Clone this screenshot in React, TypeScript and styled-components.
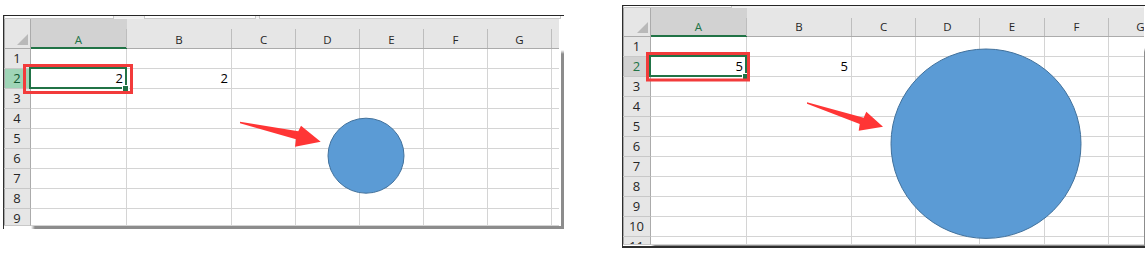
import React from "react";
import styled, { createGlobalStyle } from "styled-components";

type Column = { label: string; width: number; edge?: boolean };

interface SheetSpec {
  top: number;
  left: number;
  origin: [number, number];
  stripHeight: number;
  stripBoxes: [number, number][];
  headerHeight: number;
  headerPad: number;
  rowHead: number;
  columns: Column[];
  rowCount: number;
  lastRowHeight: number;
  value: string;
  rowTone: "green" | "gray";
  shadeTop: number;
  bottomShade: number;
  bottomBorder?: string;
  red: { x: number; y: number; w: number; h: number };
  circle: { cx: number; cy: number; rx: number; ry: number };
  arrow: string;
}

const GlobalStyle = createGlobalStyle`
  html, body {
    margin: 0;
    padding: 0;
    background: #fff;
  }
  body {
    font-family: "Open Sans", "Noto Sans", "DejaVu Sans", sans-serif;
  }
`;

const Page = styled.div`
  display: flex;
  align-items: flex-start;
  width: 1145px;
  height: 253px;
  overflow: hidden;
`;

const Panel = styled.div<{ $top: number; $left: number; $bottom?: string }>`
  position: relative;
  flex: none;
  margin: ${(p) => p.$top}px 0 0 ${(p) => p.$left}px;
  border-top: 1px solid #262626;
  border-left: 1px solid #2e2e2e;
  border-bottom: ${(p) => p.$bottom ?? "none"};
`;

const Strip = styled.div<{ $h: number }>`
  display: flex;
  height: ${(p) => p.$h}px;
  margin-right: 3px;
  background: #f1f1f1;
  overflow: hidden;
`;

const StripBox = styled.div<{ $x: number; $w: number }>`
  flex: none;
  margin-left: ${(p) => p.$x}px;
  width: ${(p) => p.$w}px;
  background: #fff;
  border: 1px solid #c9c9c9;
  border-top: none;
`;

const HeaderGrid = styled.div<{ $cols: string; $h: number }>`
  display: grid;
  grid-template-columns: ${(p) => p.$cols};
  height: ${(p) => p.$h}px;
  padding-right: 3px;
`;

const Corner = styled.div`
  display: flex;
  align-items: flex-end;
  justify-content: flex-end;
  padding: 0 2px 3px 0;
  background: #e6e6e6;
  border-right: 1px solid #ababab;
  border-bottom: 1px solid #ababab;
  box-shadow: inset 1px 0 #a6a6a6;
`;

const Triangle = styled.span`
  width: 11px;
  height: 11px;
  background: #b9b9b9;
  clip-path: polygon(100% 0, 100% 100%, 0 100%);
`;

const HeadCell = styled.div<{ $active?: boolean; $edge?: boolean; $pad: number }>`
  position: relative;
  display: flex;
  align-items: flex-end;
  justify-content: flex-start;
  padding-bottom: ${(p) => p.$pad}px;
  overflow: hidden;
  background: ${(p) => (p.$active ? "#d2d2d2" : "#e6e6e6")};
  border-bottom: 1px solid ${(p) => (p.$active ? "#217346" : "#ababab")};
  box-shadow: ${(p) => (p.$active ? "inset 0 -1px #217346" : "none")};

  &::after {
    content: "";
    display: ${(p) => (p.$edge ? "none" : "block")};
    position: absolute;
    right: 0;
    bottom: 0;
    width: 1px;
    height: 65%;
    background: #bdbdbd;
  }
`;

const HeadLabel = styled.span<{ $w: number; $active?: boolean }>`
  flex: none;
  width: ${(p) => p.$w}px;
  text-align: center;
  font-size: 11.5px;
  line-height: 16px;
  color: ${(p) => (p.$active ? "#217346" : "#262626")};
`;

const Body = styled.div<{
  $cols: string;
  $rows: string;
  $shadeTop: number;
  $rowHead: number;
  $bottom: number;
}>`
  display: grid;
  grid-template-columns: ${(p) => p.$cols};
  grid-template-rows: ${(p) => p.$rows};
  padding: 0 3px ${(p) => p.$bottom}px 0;
  background:
    linear-gradient(
        to bottom,
        rgba(140, 140, 140, 0) ${(p) => p.$shadeTop}px,
        #8c8c8c ${(p) => p.$shadeTop + 4}px
      )
      right top / 3px 100% no-repeat,
    linear-gradient(
        to right,
        rgba(140, 140, 140, 0) ${(p) => p.$rowHead}px,
        #8c8c8c ${(p) => p.$rowHead + 4}px
      )
      left bottom / 100% ${(p) => p.$bottom}px no-repeat;
`;

const RowHead = styled.div<{ $tone?: "green" | "gray" }>`
  display: flex;
  justify-content: center;
  overflow: hidden;
  font-size: 13px;
  line-height: 19px;
  background: ${(p) =>
    p.$tone === "green" ? "#9fd5b7" : p.$tone === "gray" ? "#d2d2d2" : "#e6e6e6"};
  color: ${(p) =>
    p.$tone === "green" ? "#0f5530" : p.$tone === "gray" ? "#217346" : "#262626"};
  border-right: 1px solid #ababab;
  border-bottom: 1px solid #c8c8c8;
  box-shadow: inset 1px 0 #a6a6a6;
`;

const Cell = styled.div<{ $edge?: boolean; $selected?: boolean }>`
  position: relative;
  display: flex;
  justify-content: flex-end;
  padding-right: 3px;
  font-size: 13px;
  line-height: 19px;
  color: #000;
  background: #fff;
  overflow: ${(p) => (p.$selected ? "visible" : "hidden")};
  z-index: ${(p) => (p.$selected ? 1 : 0)};
  border-right: ${(p) => (p.$edge ? "none" : "1px solid #d4d4d4")};
  border-bottom: 1px solid #d4d4d4;

  &::after {
    content: "";
    display: ${(p) => (p.$selected ? "block" : "none")};
    position: absolute;
    inset: -2px -1px -1px -2px;
    border: 2px solid #217346;
  }

  &::before {
    content: "";
    display: ${(p) => (p.$selected ? "block" : "none")};
    position: absolute;
    right: -3px;
    bottom: -4px;
    width: 5px;
    height: 5px;
    background: #217346;
    border: 1px solid #fff;
    z-index: 2;
  }
`;

const Overlay = styled.svg`
  position: absolute;
  top: 0;
  left: 0;
  overflow: visible;
  pointer-events: none;
  z-index: 3;
`;

const Sheet: React.FC<{ spec: SheetSpec }> = ({ spec }) => {
  const cols = [spec.rowHead, ...spec.columns.map((c) => c.width)]
    .map((w) => `${w}px`)
    .join(" ");
  const rowHeights = Array.from({ length: spec.rowCount }, (_, i) =>
    i === spec.rowCount - 1 ? spec.lastRowHeight : 20
  );
  const [ox, oy] = spec.origin;

  return (
    <Panel $top={spec.top} $left={spec.left} $bottom={spec.bottomBorder}>
      <Strip $h={spec.stripHeight}>
        {spec.stripBoxes.map(([x, w], i) => (
          <StripBox key={i} $x={x} $w={w} />
        ))}
      </Strip>
      <HeaderGrid $cols={cols} $h={spec.headerHeight}>
        <Corner>
          <Triangle />
        </Corner>
        {spec.columns.map((c, i) => (
          <HeadCell key={i} $active={i === 0} $edge={c.edge} $pad={spec.headerPad}>
            {c.label && (
              <HeadLabel $w={c.edge ? 63 : c.width - 1} $active={i === 0}>
                {c.label}
              </HeadLabel>
            )}
          </HeadCell>
        ))}
      </HeaderGrid>
      <Body
        $cols={cols}
        $rows={rowHeights.map((h) => `${h}px`).join(" ")}
        $shadeTop={spec.shadeTop}
        $rowHead={spec.rowHead}
        $bottom={spec.bottomShade}
      >
        {rowHeights.map((_, r) => (
          <React.Fragment key={r}>
            <RowHead $tone={r === 1 ? spec.rowTone : undefined}>{r + 1}</RowHead>
            {spec.columns.map((c, ci) => (
              <Cell key={ci} $edge={c.edge} $selected={r === 1 && ci === 0}>
                {r === 1 && ci < 2 ? spec.value : ""}
              </Cell>
            ))}
          </React.Fragment>
        ))}
      </Body>
      <Overlay width={600} height={260} viewBox={`${ox} ${oy} 600 260`}>
        <ellipse
          cx={spec.circle.cx}
          cy={spec.circle.cy}
          rx={spec.circle.rx}
          ry={spec.circle.ry}
          fill="#5b9bd5"
          stroke="#41719c"
          strokeWidth={1}
        />
        <polygon points={spec.arrow} fill="#ff3535" />
        <rect
          x={spec.red.x}
          y={spec.red.y}
          width={spec.red.w}
          height={spec.red.h}
          fill="none"
          stroke="#f23b3b"
          strokeWidth={3}
        />
      </Overlay>
    </Panel>
  );
};

const leftSheet: SheetSpec = {
  top: 15,
  left: 3,
  origin: [4, 16],
  stripHeight: 3,
  stripBoxes: [
    [0, 108],
    [30, 110],
    [3, 300],
  ],
  headerHeight: 30,
  headerPad: 0,
  rowHead: 27,
  columns: [
    { label: "A", width: 96 },
    { label: "B", width: 105 },
    { label: "C", width: 64 },
    { label: "D", width: 64 },
    { label: "E", width: 64 },
    { label: "F", width: 64 },
    { label: "G", width: 64 },
    { label: "", width: 7, edge: true },
  ],
  rowCount: 9,
  lastRowHeight: 17,
  value: "2",
  rowTone: "green",
  shadeTop: 1,
  bottomShade: 3,
  red: { x: 24.5, y: 65.5, w: 107, h: 27 },
  circle: { cx: 366, cy: 155.7, rx: 38, ry: 37.5 },
  arrow: "240,121.8 298.3,131.3 301,125.7 320.7,141.7 295,146.7 296,139.3 240,123.3",
};

const rightSheet: SheetSpec = {
  top: 5,
  left: 58,
  origin: [621, 6],
  stripHeight: 2,
  stripBoxes: [[0, 107]],
  headerHeight: 29,
  headerPad: 1,
  rowHead: 28,
  columns: [
    { label: "A", width: 96 },
    { label: "B", width: 105 },
    { label: "C", width: 64 },
    { label: "D", width: 64 },
    { label: "E", width: 65 },
    { label: "F", width: 64 },
    { label: "G", width: 35, edge: true },
  ],
  rowCount: 11,
  lastRowHeight: 8,
  value: "5",
  rowTone: "gray",
  shadeTop: 11,
  bottomShade: 1,
  bottomBorder: "2px solid #2f2f2f",
  red: { x: 645.5, y: 53.5, w: 101, h: 26.5 },
  circle: { cx: 984, cy: 143.7, rx: 95, ry: 94.7 },
  arrow: "805,102.3 861.7,117.7 864.3,111.7 881,126.7 856.7,130.7 857.7,124 805,103.8",
};

const App: React.FC = () => (
  <>
    <GlobalStyle />
    <Page>
      <Sheet spec={leftSheet} />
      <Sheet spec={rightSheet} />
    </Page>
  </>
);

export default App;
